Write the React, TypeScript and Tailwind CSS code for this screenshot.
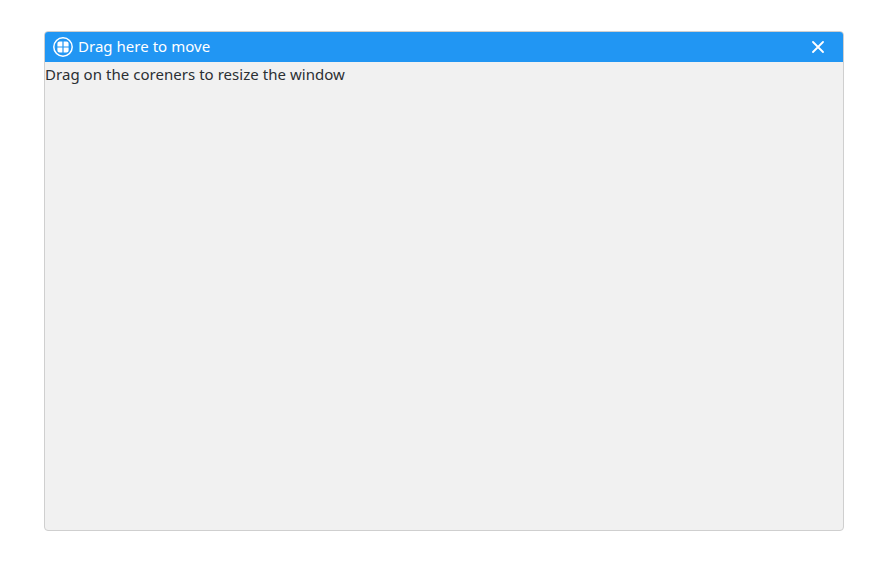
export default function App() {
  return (
    <div className="min-h-[578px] bg-white pt-[31px] pl-[44px] font-['Noto_Sans','Open_Sans',sans-serif]">
      <div className="flex h-[500px] w-[800px] flex-col overflow-hidden rounded-[4px] border border-[#cfcfcf] bg-[#f1f1f1]">
        <div className="flex h-[30px] shrink-0 items-center bg-[#2196f3] pl-[8px] pr-[19px] text-white">
          <svg width="20" height="20" viewBox="0 0 20 20" className="shrink-0">
            <circle cx="10" cy="10" r="9.2" fill="none" stroke="white" strokeWidth="1.5" />
            <path d="M4.4 9.4V6.4a2 2 0 0 1 2-2h3v5zM10.6 4.4h3a2 2 0 0 1 2 2v3h-5zM4.4 10.6h5v5h-3a2 2 0 0 1-2-2zM10.6 10.6h5v3a2 2 0 0 1-2 2h-3z" fill="white" />
          </svg>
          <span className="ml-[5px] -translate-y-px text-[15px] leading-none tracking-[0.03px]">Drag here to move</span>
          <svg width="12" height="12" viewBox="0 0 12 12" className="ml-auto shrink-0">
            <path d="M1 1l10 10M11 1L1 11" stroke="white" strokeWidth="1.8" strokeLinecap="round" />
          </svg>
        </div>
        <div className="text-[15px] leading-[24px] tracking-[0.04px] text-[#2b2f33]">Drag on the coreners to resize the window</div>
      </div>
    </div>
  );
}
